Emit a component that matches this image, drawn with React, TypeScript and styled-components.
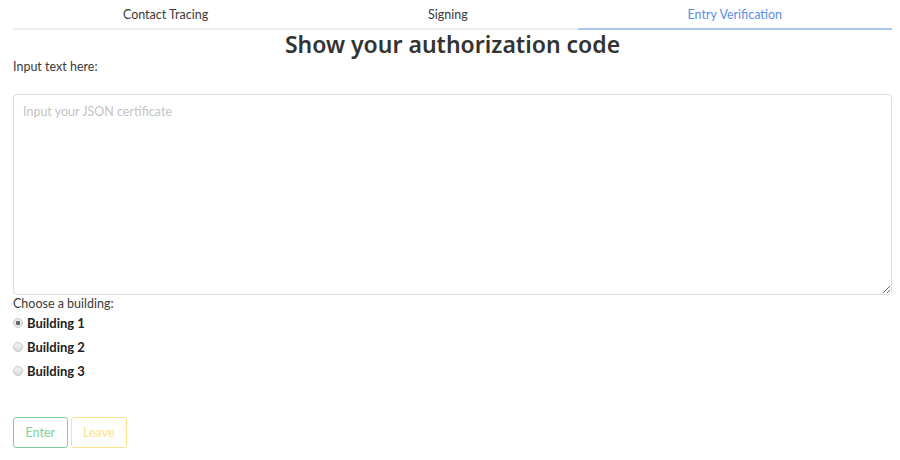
import React, { useState } from "react";
import styled, { createGlobalStyle } from "styled-components";

const Global = createGlobalStyle`
  body {
    margin: 0;
    background: #fff;
    font-family: Lato, "Noto Sans", sans-serif;
    color: #3a3a3a;
  }
`;

const Page = styled.div`
  padding: 0 8px 0 13px;
  width: 879px;
`;

const Tabs = styled.div`
  display: flex;
`;

const Tab = styled.div<{ $active?: boolean }>`
  flex: 1 1 auto;
  height: 28px;
  display: flex;
  align-items: center;
  justify-content: center;
  font-size: 12.5px;
  color: ${(p) => (p.$active ? "#5b8ee6" : "#3a3a3a")};
  border-bottom: 2px solid ${(p) => (p.$active ? "#a9c5f0" : "#eee")};
  cursor: pointer;
`;

const Title = styled.h1`
  margin: 0;
  text-align: center;
  font-family: "Noto Sans", sans-serif;
  font-size: 23px;
  font-weight: 600;
  line-height: 28px;
  color: #333;
`;

const Label = styled.div`
  font-size: 12.5px;
  line-height: 18px;
  color: #3a3a3a;
`;

const TextArea = styled.textarea`
  display: block;
  box-sizing: border-box;
  width: 100%;
  height: 201px;
  margin-top: 18px;
  padding: 9px 9px;
  border: 1px solid #ddd;
  border-radius: 4px;
  font-family: inherit;
  font-size: 12.5px;
  color: #333;
  outline: none;
  &::placeholder {
    color: #c3c3c3;
  }
`;

const Radios = styled.div`
  display: flex;
  flex-direction: column;
  gap: 6px;
  margin-top: 1px;
`;

const RadioRow = styled.label`
  display: flex;
  align-items: center;
  gap: 4px;
  font-size: 13px;
  font-weight: 700;
  line-height: 18px;
  color: #222;
  cursor: pointer;
`;

const Dot = styled.span<{ $on?: boolean }>`
  width: 8px;
  height: 8px;
  border-radius: 50%;
  border: 1px solid #c8c8c8;
  background: ${(p) =>
    p.$on
      ? "radial-gradient(circle, #666 0 2px, #e6e6e6 2.5px)"
      : "linear-gradient(#f4f4f4, #dcdcdc)"};
`;

const Buttons = styled.div`
  display: flex;
  gap: 3px;
  margin-top: 37px;
`;

const Button = styled.button<{ $tone: string }>`
  height: 31px;
  padding: 0 11.5px;
  background: #fff;
  border: 1px solid ${(p) => p.$tone};
  border-radius: 3px;
  color: ${(p) => p.$tone};
  font-family: inherit;
  font-size: 12.5px;
  cursor: pointer;
`;

const buildings = ["Building 1", "Building 2", "Building 3"];

export default function App() {
  const [choice, setChoice] = useState(0);
  return (
    <>
      <Global />
      <Page>
        <Tabs>
          <Tab>Contact Tracing</Tab>
          <Tab>Signing</Tab>
          <Tab $active>Entry Verification</Tab>
        </Tabs>
        <Title>Show your authorization code</Title>
        <Label>Input text here:</Label>
        <TextArea placeholder="Input your JSON certificate" />
        <Label>Choose a building:</Label>
        <Radios>
          {buildings.map((b, i) => (
            <RadioRow key={b} onClick={() => setChoice(i)}>
              <Dot $on={choice === i} />
              {b}
            </RadioRow>
          ))}
        </Radios>
        <Buttons>
          <Button $tone="#7dd29a">Enter</Button>
          <Button $tone="#fde18a">Leave</Button>
        </Buttons>
      </Page>
    </>
  );
}
